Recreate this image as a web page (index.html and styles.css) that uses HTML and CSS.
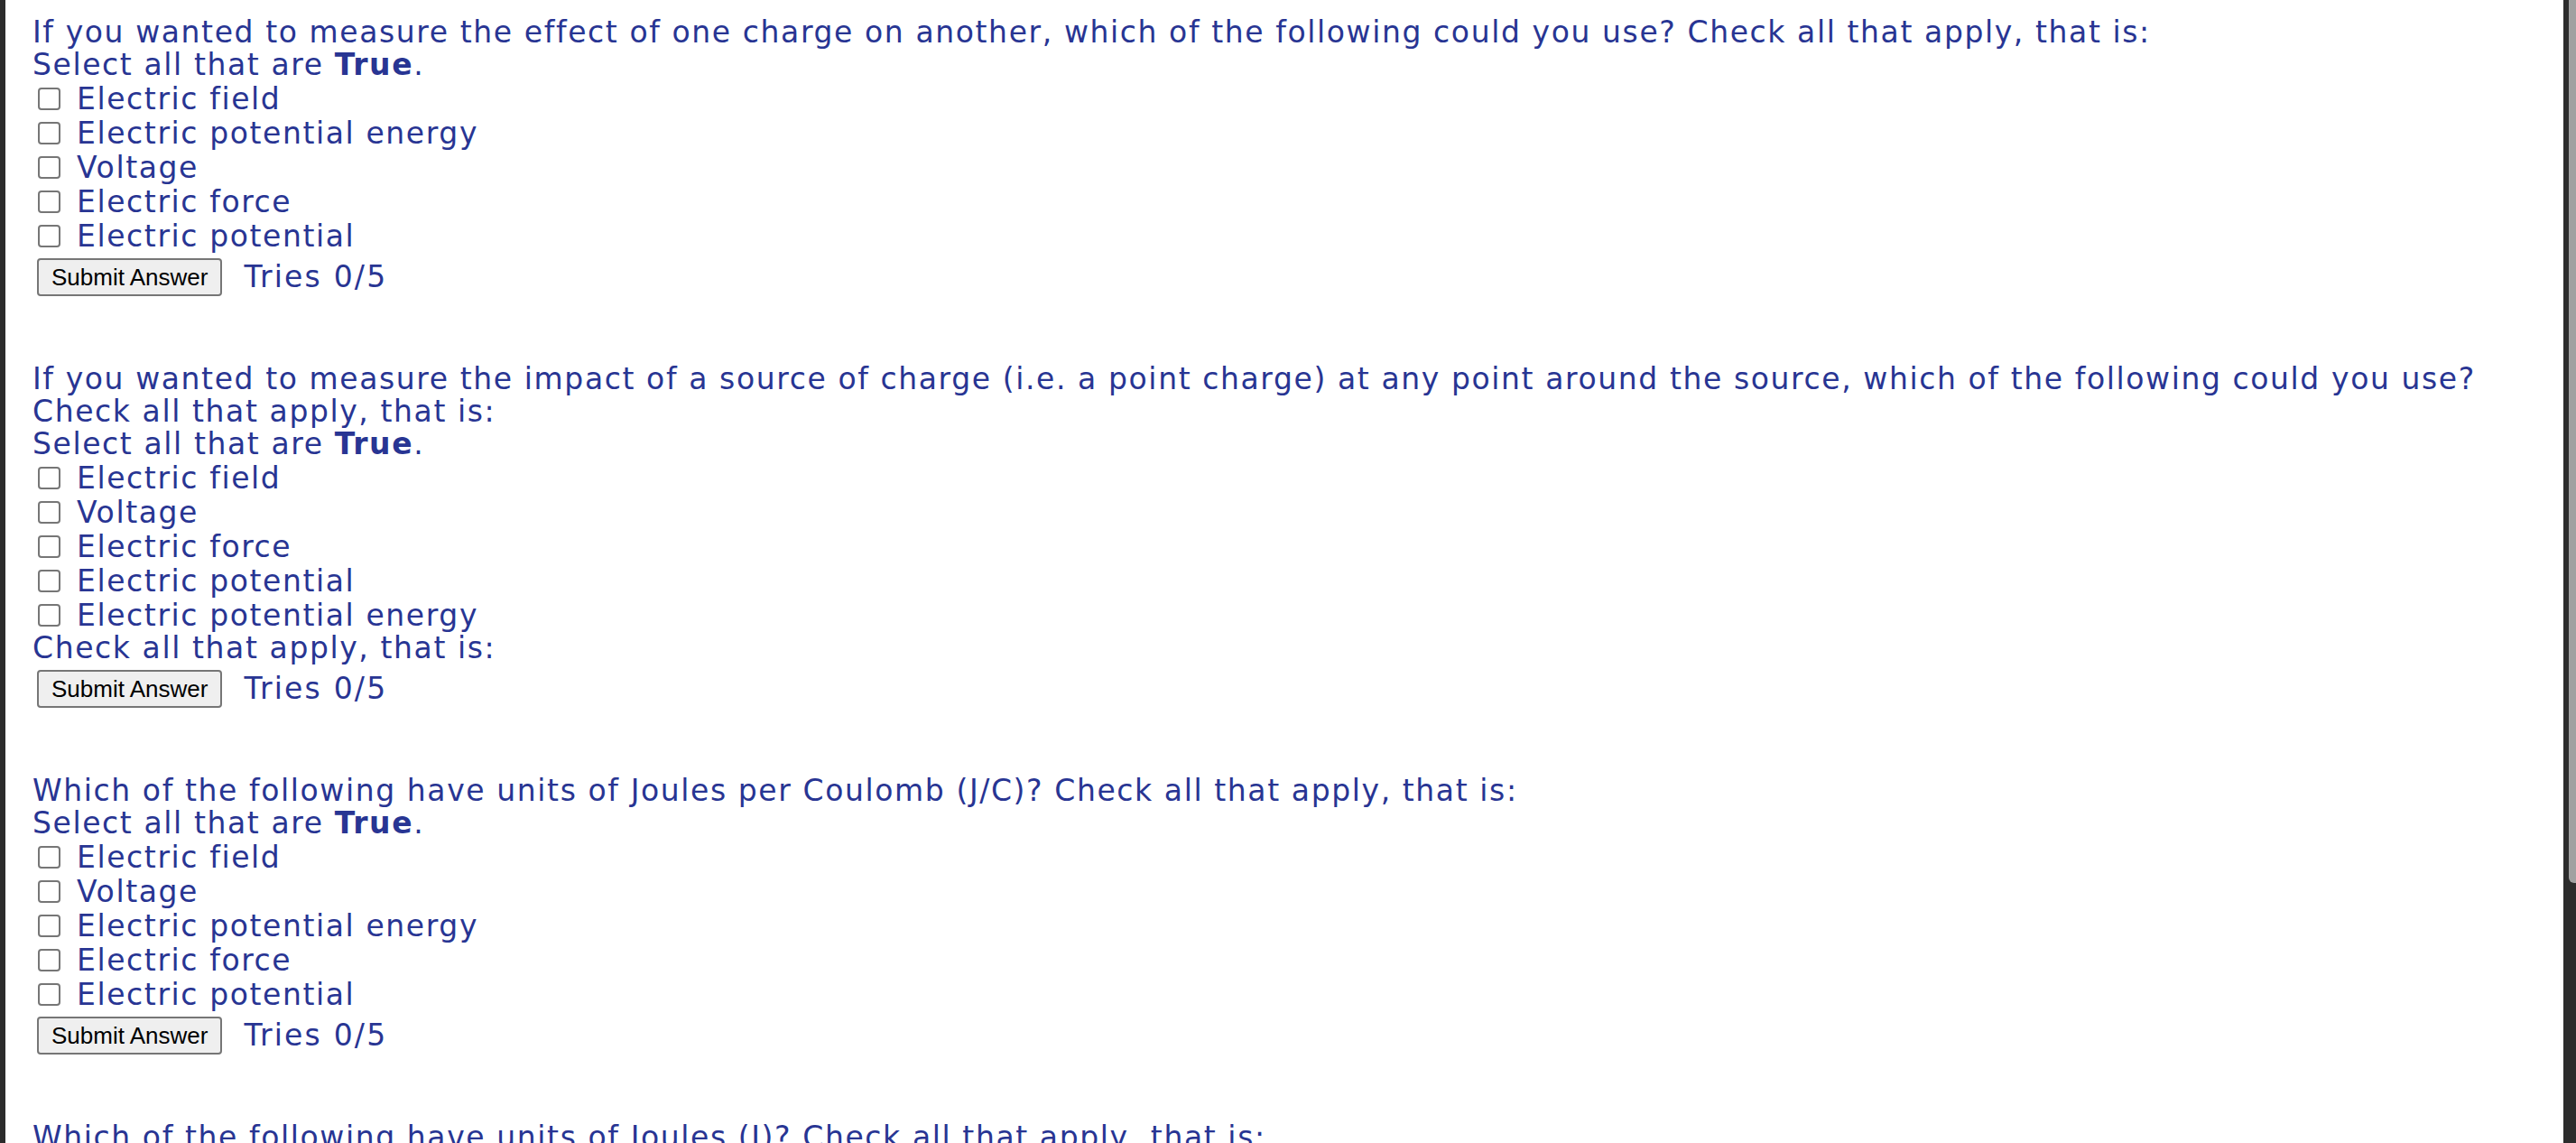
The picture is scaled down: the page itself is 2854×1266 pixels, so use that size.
FILE: index.html
```html
<!DOCTYPE html>
<html lang="en">

<head>
    <meta charset="UTF-8">
    <meta name="viewport" content="width=device-width, initial-scale=1.0">
    <title>Electric Potential - Check All That Apply</title>
    <link rel="stylesheet" href="styles.css">
</head>

<body>
    <div class="window">
        <div class="edge"></div>

        <main class="page">
            <div class="question">
                <p class="prompt"><span class="phrase">If you wanted to measure the effect of one charge on another, which of the following could you use?</span> <span class="phrase">Check all that apply, that is:</span></p>
                <p class="prompt">Select all that are <b>True</b>.</p>
                <label class="option"><input type="checkbox"> Electric field</label>
                <label class="option"><input type="checkbox"> Electric potential energy</label>
                <label class="option"><input type="checkbox"> Voltage</label>
                <label class="option"><input type="checkbox"> Electric force</label>
                <label class="option"><input type="checkbox"> Electric potential</label>
                <div class="submit-row">
                    <button type="button">Submit Answer</button>
                    <span class="tries">Tries 0/5</span>
                </div>
            </div>

            <div class="question">
                <p class="prompt"><span class="phrase">If you wanted to measure the impact of a source of charge (i.e. a point charge) at any point around the source, which of the following could you use?</span> <span class="phrase">Check all that apply, that is:</span></p>
                <p class="prompt">Select all that are <b>True</b>.</p>
                <label class="option"><input type="checkbox"> Electric field</label>
                <label class="option"><input type="checkbox"> Voltage</label>
                <label class="option"><input type="checkbox"> Electric force</label>
                <label class="option"><input type="checkbox"> Electric potential</label>
                <label class="option"><input type="checkbox"> Electric potential energy</label>
                <p class="prompt">Check all that apply, that is:</p>
                <div class="submit-row">
                    <button type="button">Submit Answer</button>
                    <span class="tries">Tries 0/5</span>
                </div>
            </div>

            <div class="question">
                <p class="prompt"><span class="phrase">Which of the following have units of Joules per Coulomb (J/C)?</span> <span class="phrase">Check all that apply, that is:</span></p>
                <p class="prompt">Select all that are <b>True</b>.</p>
                <label class="option"><input type="checkbox"> Electric field</label>
                <label class="option"><input type="checkbox"> Voltage</label>
                <label class="option"><input type="checkbox"> Electric potential energy</label>
                <label class="option"><input type="checkbox"> Electric force</label>
                <label class="option"><input type="checkbox"> Electric potential</label>
                <div class="submit-row">
                    <button type="button">Submit Answer</button>
                    <span class="tries">Tries 0/5</span>
                </div>
            </div>

            <div class="question">
                <p class="prompt"><span class="phrase">Which of the following have units of Joules (J)?</span> <span class="phrase">Check all that apply, that is:</span></p>
            </div>
        </main>

        <div class="scrollbar">
            <div class="thumb"></div>
        </div>
    </div>
</body>

</html>
```

FILE: styles.css
```css
* {
    margin: 0;
    padding: 0;
    box-sizing: border-box;
}

html,
body {
    height: 100%;
    overflow: hidden;
    background: #ffffff;
}

.window {
    display: flex;
    height: 100vh;
}

.edge {
    width: 6px;
    flex-shrink: 0;
    background: #2b2b2b;
}

.page {
    flex: 1;
    overflow: hidden;
    padding: 18px 0 0 30px;
    font-family: "DejaVu Sans", Verdana, sans-serif;
    font-size: 33px;
    letter-spacing: 1.6px;
    color: #283593;
}

.question {
    margin-bottom: 68px;
}

.prompt {
    line-height: 36px;
}

.phrase {
    white-space: nowrap;
}

.option {
    display: flex;
    align-items: center;
    height: 38px;
    white-space: nowrap;
}

.option input[type="checkbox"] {
    appearance: none;
    width: 25px;
    height: 25px;
    margin: 0 18px 0 6px;
    border: 2px solid #767676;
    border-radius: 4px;
    background: #ffffff;
}

.submit-row {
    display: flex;
    align-items: center;
    padding: 6px 0;
}

button {
    height: 42px;
    padding: 0 14px;
    margin-left: 5px;
    border: 2px solid #767676;
    border-radius: 4px;
    background: #efefef;
    color: #000000;
    font-family: "Liberation Sans", Arial, sans-serif;
    font-size: 26px;
    letter-spacing: 0;
}

.tries {
    margin-left: 24px;
    line-height: 36px;
    letter-spacing: 2.2px;
}

.scrollbar {
    width: 14px;
    flex-shrink: 0;
    display: flex;
    justify-content: flex-end;
    background: #2c2c2c;
}

.thumb {
    width: 8px;
    height: 978px;
    background: #a1a1a1;
    border-bottom-left-radius: 6px;
}
```
